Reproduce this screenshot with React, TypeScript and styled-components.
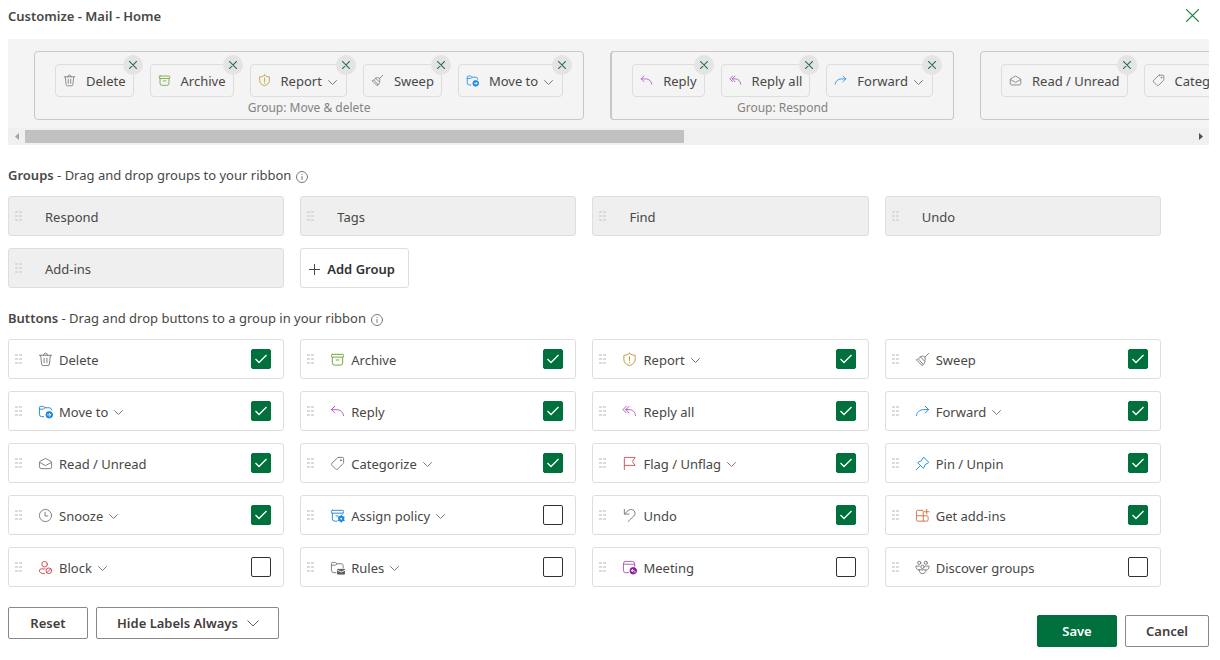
import React, { useState } from "react";
import styled, { createGlobalStyle } from "styled-components";

const GlobalStyle = createGlobalStyle`
  * { box-sizing: border-box; }
  body {
    margin: 0;
    background: #ffffff;
    color: #484746;
    font-family: "Noto Sans", "Open Sans", sans-serif;
    font-size: 13px;
    line-height: 20px;
  }
  button, input, select { font: inherit; color: inherit; }
  h1, h2, ul { margin: 0; padding: 0; font: inherit; }
  ul { list-style: none; }
`;

/* ---------- icons ---------- */

const Svg = styled.svg<{ $size?: number; $color?: string }>`
  display: block;
  flex: none;
  width: ${(p) => p.$size ?? 15}px;
  height: ${(p) => p.$size ?? 15}px;
  color: ${(p) => p.$color ?? "#7a7978"};
  fill: none;
  stroke: currentColor;
  stroke-linecap: round;
  stroke-linejoin: round;
`;

const PURPLE = "#b052c0";
const BLUE = "#1e88dc";
const GREY = "#7a7978";

type Glyph = { color: string; art: React.ReactNode };

const ARCHIVE_TOP = "M2.5 2.5h11a1 1 0 0 1 1 1v1a1 1 0 0 1-1 1h-11a1 1 0 0 1-1-1v-1a1 1 0 0 1 1-1z";

const glyphs: Record<string, Glyph> = {
  delete: {
    color: GREY,
    art: <path d="M1.5 3.5h13M5.8 3.5a2.2 2.2 0 0 1 4.4 0M2.8 3.5l1.1 9.6a1.5 1.5 0 0 0 1.5 1.4h5.2a1.5 1.5 0 0 0 1.5-1.4l1.1-9.6M6.5 6.5v5M9.5 6.5v5" />,
  },
  archive: {
    color: "#6ba32f",
    art: <path d={ARCHIVE_TOP + "M2.5 5.5v6a2.5 2.5 0 0 0 2.5 2.5h6a2.5 2.5 0 0 0 2.5-2.5v-6M6.5 8.5h3"} />,
  },
  report: {
    color: "#bf972b",
    art: <path d="M8 1.5c-1.8 1.4-3.7 2-6 2v4.3c0 3.300 2.200 5.500 6 6.700 3.800-1.200 6-3.400 6-6.700V3.500c-2.300 0-4.200-.6-6-2zM8 5v4.200M8 11.200v.3" />,
  },
  sweep: {
    color: GREY,
    art: <path d="M14.500 1.500l-4.300 4.400M6.300 5c1.400-1.100 2.900-.8 3.900.3s1.200 2.500.3 4M5.800 5.300l4.900 4.900c-.6 1.600-1.500 3-3 4.400L1.400 8.200c1.800-.5 3.200-1.400 4.400-2.900zM4.200 8.100l1.300 1.200M5.800 9.900l1.600 1.700M7.600 12l.8 1" />,
  },
  moveTo: {
    color: BLUE,
    art: (
      <>
        <path d="M6 13.500H4A2.500 2.500 0 0 1 1.500 11V4A1.500 1.500 0 0 1 3 2.500h2.200c.5 0 .8.2 1.100.5L7.500 4h4.500A2.500 2.500 0 0 1 14.500 6.500M1.500 5.500h3.800c.4 0 .7-.1 1-.4L7.500 4" />
        <circle cx="12" cy="11.500" r="3.500" fill="currentColor" />
        <path d="M10.300 11.500h3.200M12.200 10l1.500 1.500-1.500 1.500" stroke="#ffffff" />
      </>
    ),
  },
  reply: {
    color: PURPLE,
    art: <path d="M5 2.500l-3.500 3.500L5 9.500M1.500 6h5c4.500 0 7.500 2.500 8 6.500" />,
  },
  replyAll: {
    color: PURPLE,
    art: <path d="M4.500 2.500L1 6l3.500 3.500M7.500 2.500L4 6l3.500 3.500M4 6h3.500c4 0 6.500 2.500 7 6.500" />,
  },
  forward: {
    color: BLUE,
    art: <path d="M11 2.500l3.500 3.500L11 9.500M14.500 6h-5c-4.500 0-7.500 2.500-8 6.500" />,
  },
  read: {
    color: GREY,
    art: <path d="M1.500 6.800c0-.5.200-.8.600-1L8 2.500l5.900 3.300c.4.200.6.500.6 1v4.700a2 2 0 0 1-2 2h-9a2 2 0 0 1-2-2zM1.800 6.800L8 10.300l6.200-3.500" />,
  },
  categorize: {
    color: GREY,
    art: (
      <>
        <path d="M9.200 1.500h4.300a1 1 0 0 1 1 1v4.300c0 .5-.2.9-.5 1.200l-5.700 5.800a1.700 1.700 0 0 1-2.400 0L2.100 10a1.700 1.700 0 0 1 0-2.400L8 1.900c.3-.3.700-.4 1.200-.4z" />
        <circle cx="11.500" cy="4.500" r=".5" fill="currentColor" />
      </>
    ),
  },
  flag: {
    color: "#cc565d",
    art: <path d="M2.500 14.500v-13h11.500l-3 4.200 3 4.300H2.500" />,
  },
  pin: {
    color: BLUE,
    art: <path d="M9.700 1.800l4.500 4.500c.4.400.3 1-.2 1.200l-3.100 1.600-1.400 3.400c-.2.500-.7.600-1.100.2L3.300 7.600c-.4-.4-.3-.9.2-1.100l3.400-1.400 1.600-3.100c.2-.5.8-.6 1.200-.2zM5.800 10.200l-4.300 4.300" />,
  },
  snooze: {
    color: GREY,
    art: (
      <>
        <circle cx="8" cy="8" r="6.500" />
        <path d="M7.500 4.500v4h3" />
      </>
    ),
  },
  policy: {
    color: BLUE,
    art: (
      <>
        <path d={ARCHIVE_TOP + "M2.500 5.500v6a2.500 2.500 0 0 0 2.500 2.500h2.500M13.500 5.500v1M6.500 8.500h2"} />
        <circle cx="12" cy="11.500" r="2.200" strokeWidth="2" />
        <path d="M12 8v7M9 9.800l6 3.400M15 9.800l-6 3.400" strokeWidth="1.400" />
        <circle cx="12" cy="11.500" r="1" fill="#ffffff" stroke="none" />
      </>
    ),
  },
  undo: {
    color: GREY,
    art: <path d="M2.500 1.500v5h5M2.800 6.200l3.600-3.300c2-1.800 4.900-1.700 6.500.1 1.500 1.700 1.300 4-.3 5.600L6.500 14.500" />,
  },
  addins: {
    color: "#d96f3f",
    art: (
      <path d="M7.500 2.500H3A1.500 1.500 0 0 0 1.500 4v8.500A1.500 1.500 0 0 0 3 14h9.500a1.500 1.500 0 0 0 1.500-1.500V9.800a1.500 1.500 0 0 0-1.500-1.500h-11M7.500 2.500h.3a1 1 0 0 1 1 1V14M12.500 1.500v5M10 4h5" />
    ),
  },
  block: {
    color: "#c4474f",
    art: (
      <>
        <circle cx="7" cy="4.500" r="3" />
        <path d="M7.500 9.500h-4a2 2 0 0 0-2 2c0 2 2 3 5.500 3" />
        <circle cx="11.500" cy="11.500" r="3" />
        <path d="M9.500 13.500l4-4" />
      </>
    ),
  },
  rules: {
    color: GREY,
    art: (
      <>
        <path d="M6.500 13.500H4A2.500 2.500 0 0 1 1.500 11V4A1.500 1.500 0 0 1 3 2.500h2.200c.5 0 .8.200 1.100.5L7.500 4h4.500A2 2 0 0 1 14 6v2.500M1.500 5.500h3.800c.4 0 .7-.1 1-.4L7.500 4" />
        <path d="M8.500 10h7v5h-7z" fill="#5c5b5a" stroke="#5c5b5a" />
        <path d="M8.500 11.200l3.500 1.600 3.500-1.600" stroke="#ffffff" />
      </>
    ),
  },
  meeting: {
    color: PURPLE,
    art: (
      <>
        <path d="M7 13.500H4A2.500 2.500 0 0 1 1.500 11V4A2.500 2.500 0 0 1 4 1.500h7A2.500 2.500 0 0 1 13.500 4v3M1.500 4.500h12" />
        <circle cx="12" cy="11.500" r="3.500" fill="#8a1f9c" stroke="#8a1f9c" />
        <path d="M11.500 9.800l-1.500 1.500 1.500 1.500M10.200 11.300h2c1 0 1.700.6 1.800 1.700" stroke="#ffffff" />
      </>
    ),
  },
  discover: {
    color: GREY,
    art: (
      <>
        <circle cx="4.500" cy="3" r="1.700" />
        <circle cx="11.500" cy="3" r="1.700" />
        <circle cx="8" cy="7.300" r="1.800" />
        <path d="M4.700 6.500H1c0 2.500 1 4 2.900 4.300M11.300 6.500H15c0 2.500-1 4-2.900 4.300M4.500 10.500h7c.2 2.500-1.200 4-3.500 4s-3.700-1.500-3.500-4z" />
      </>
    ),
  },
};

const Icon = ({ name, size }: { name: string; size?: number }) => (
  <Svg viewBox="0 0 16 16" $size={size} $color={glyphs[name].color} aria-hidden="true">
    {glyphs[name].art}
  </Svg>
);

const ChevronSvg = styled(Svg)`
  width: 9px;
  height: 5px;
  margin-top: 3px;
  color: #7a7978;
`;
const Chevron = () => (
  <ChevronSvg viewBox="0 0 9 5" aria-hidden="true">
    <path d="M.5.5l4 4 4-4" />
  </ChevronSvg>
);

const Cross = ({ size, color }: { size: number; color: string }) => (
  <Svg viewBox="0 0 12 12" $size={size} $color={color} aria-hidden="true">
    <path d="M.5.500l11 11M11.500.500l-11 11" strokeWidth={14 / size} />
  </Svg>
);

const GripSvg = styled.svg`
  display: block;
  flex: none;
  width: 7px;
  height: 10px;
  fill: #dcdbda;
`;
const Grip = () => (
  <GripSvg viewBox="0 0 7 10" aria-hidden="true">
    <path d="M0 0h3v2H0zM4 0h3v2H4zM0 4h3v2H0zM4 4h3v2H4zM0 8h3v2H0zM4 8h3v2H4z" />
  </GripSvg>
);

const Info = () => (
  <Svg viewBox="0 0 12 12" $size={12} $color="#7a7978" role="img" aria-label="More information">
    <circle cx="6" cy="6" r="5.500" />
    <path d="M6 5.500v3M6 3.300v.2" />
  </Svg>
);

/* ---------- layout ---------- */

const Page = styled.main`
  padding: 0 11px 12px 8px;
`;

const Header = styled.header`
  display: flex;
  align-items: flex-start;
  justify-content: space-between;
  height: 39px;
  padding: 6px 10px 0 0;
`;

const Title = styled.h1`
  font-weight: 600;
`;

const CloseButton = styled.button`
  padding: 3px 0;
  border: 0;
  background: none;
`;

const RibbonFrame = styled.section`
  background: #f4f4f4;
`;

const Ribbon = styled.div`
  display: flex;
  gap: 26px;
  padding: 12px 26px 8px;
  overflow: hidden;
`;

const RibbonGroup = styled.div<{ $accent?: boolean }>`
  flex: none;
  padding: 12px 20px 3px;
  border: 1px solid #c8c8c8;
  border-left-width: ${(p) => (p.$accent ? 2 : 1)}px;
  border-radius: 4px;
`;

const Chips = styled.ul`
  display: flex;
  gap: 16px;
`;

const Chip = styled.li`
  position: relative;
  display: flex;
  align-items: center;
  height: 33px;
  padding: 0 7px;
  border: 1px solid #dddddd;
  border-radius: 4px;
  white-space: nowrap;
`;

const ChipLabel = styled.span`
  margin-left: 10px;
  padding-top: 1px;
`;

const ChipChevron = styled.span`
  margin-left: 6px;
  margin-right: 2px;
`;

const RemoveButton = styled.button`
  position: absolute;
  top: -10px;
  right: -10px;
  display: grid;
  place-items: center;
  width: 20px;
  height: 20px;
  padding: 0;
  border: 0;
  border-radius: 50%;
  background: #e4e4e4;
`;

const GroupCaption = styled.div`
  margin-top: 3px;
  color: #84827f;
  font-size: 12px;
  line-height: 16px;
  text-align: center;
`;

const ScrollTrack = styled.div`
  display: flex;
  align-items: center;
  height: 17px;
  background: #f0f0f0;
`;

const ScrollArrow = styled.button<{ $dim?: boolean }>`
  display: grid;
  place-items: center;
  width: 17px;
  height: 17px;
  padding: 0;
  border: 0;
  background: none;
  color: ${(p) => (p.$dim ? "#a3a3a3" : "#505050")};
`;

const ArrowSvg = styled.svg`
  width: 4px;
  height: 7px;
  fill: currentColor;
`;

const ScrollLane = styled.div`
  flex: 1;
`;

const ScrollThumb = styled.div`
  width: 56.5%;
  height: 13px;
  background: #c1c1c1;
`;

const SectionTitle = styled.h2`
  display: flex;
  align-items: center;
  gap: 5px;
  margin-top: 20px;
  margin-bottom: 11px;
`;

const Strong = styled.strong`
  font-weight: 600;
`;

const InfoWrap = styled.span`
  padding-top: 3px;
`;

const CardGrid = styled.ul`
  display: grid;
  grid-template-columns: repeat(4, 1fr);
  gap: 12px 16px;
  width: 96%;
`;

const Card = styled.li<{ $filled?: boolean }>`
  display: flex;
  align-items: center;
  height: 40px;
  padding: 0 12px 0 6px;
  border: 1px solid #dedede;
  border-radius: 3px;
  background: ${(p) => (p.$filled ? "#efefef" : "#ffffff")};
`;

const GroupName = styled.span`
  margin-left: 23px;
  padding-top: 2px;
`;

const AddGroupCell = styled.li`
  display: flex;
`;

const AddGroupButton = styled.button`
  display: flex;
  align-items: center;
  gap: 7px;
  height: 40px;
  padding: 2px 13px 0 8px;
  border: 1px solid #dedede;
  border-radius: 3px;
  background: #ffffff;
  color: #323130;
  font-weight: 600;
`;

const ItemLabel = styled.label`
  display: flex;
  align-items: center;
  gap: 6px;
  flex: 1;
  margin-left: 16px;
`;

const ItemText = styled.span`
  padding-top: 2px;
`;

const CheckWrap = styled.span`
  position: relative;
  display: block;
  flex: none;
  width: 20px;
  height: 20px;
`;

const CheckInput = styled.input`
  appearance: none;
  display: block;
  width: 20px;
  height: 20px;
  margin: 0;
  border: 1px solid #323130;
  border-radius: 2px;
  background: #ffffff;
  &:checked {
    border-color: #00703c;
    background: #00703c;
  }
`;

const CheckMark = styled.svg`
  position: absolute;
  inset: 0;
  width: 20px;
  height: 20px;
  fill: none;
  stroke: #ffffff;
  stroke-width: 1.3;
  pointer-events: none;
`;

const Footer = styled.footer`
  display: flex;
  justify-content: space-between;
  margin-top: 20px;
`;

const Actions = styled.div<{ $drop?: boolean }>`
  display: flex;
  gap: 8px;
  margin-top: ${(p) => (p.$drop ? 8 : 0)}px;
`;

const ActionButton = styled.button<{ $primary?: boolean }>`
  min-width: 80px;
  height: 32px;
  padding: 0 20px;
  border: 1px solid ${(p) => (p.$primary ? "#00703c" : "#8a8886")};
  border-radius: 2px;
  background: ${(p) => (p.$primary ? "#00703c" : "#ffffff")};
  color: ${(p) => (p.$primary ? "#ffffff" : "#3f3e3d")};
  font-weight: 600;
`;

const SelectWrap = styled.div`
  position: relative;
`;

const LabelSelect = styled.select`
  appearance: none;
  width: 183px;
  height: 32px;
  padding: 0 36px 0 20px;
  border: 1px solid #8a8886;
  border-radius: 2px;
  background: #ffffff;
  color: #3f3e3d;
  font-weight: 600;
`;

const SelectChevron = styled.svg`
  position: absolute;
  top: 13px;
  right: 20px;
  width: 12px;
  height: 7px;
  fill: none;
  stroke: #6b5f4c;
  pointer-events: none;
`;

/* ---------- data ---------- */

type Command = { icon: string; label: string; menu?: boolean };

const ribbonGroups: { caption?: string; accent?: boolean; items: Command[] }[] = [
  {
    caption: "Group: Move & delete",
    items: [
      { icon: "delete", label: "Delete" },
      { icon: "archive", label: "Archive" },
      { icon: "report", label: "Report", menu: true },
      { icon: "sweep", label: "Sweep" },
      { icon: "moveTo", label: "Move to", menu: true },
    ],
  },
  {
    caption: "Group: Respond",
    accent: true,
    items: [
      { icon: "reply", label: "Reply" },
      { icon: "replyAll", label: "Reply all" },
      { icon: "forward", label: "Forward", menu: true },
    ],
  },
  {
    items: [
      { icon: "read", label: "Read / Unread" },
      { icon: "categorize", label: "Categorize", menu: true },
    ],
  },
];

const groupNames = ["Respond", "Tags", "Find", "Undo", "Add-ins"];

const commands: (Command & { on: boolean })[] = [
  { icon: "delete", label: "Delete", on: true },
  { icon: "archive", label: "Archive", on: true },
  { icon: "report", label: "Report", menu: true, on: true },
  { icon: "sweep", label: "Sweep", on: true },
  { icon: "moveTo", label: "Move to", menu: true, on: true },
  { icon: "reply", label: "Reply", on: true },
  { icon: "replyAll", label: "Reply all", on: true },
  { icon: "forward", label: "Forward", menu: true, on: true },
  { icon: "read", label: "Read / Unread", on: true },
  { icon: "categorize", label: "Categorize", menu: true, on: true },
  { icon: "flag", label: "Flag / Unflag", menu: true, on: true },
  { icon: "pin", label: "Pin / Unpin", on: true },
  { icon: "snooze", label: "Snooze", menu: true, on: true },
  { icon: "policy", label: "Assign policy", menu: true, on: false },
  { icon: "undo", label: "Undo", on: true },
  { icon: "addins", label: "Get add-ins", on: true },
  { icon: "block", label: "Block", menu: true, on: false },
  { icon: "rules", label: "Rules", menu: true, on: false },
  { icon: "meeting", label: "Meeting", on: false },
  { icon: "discover", label: "Discover groups", on: false },
];

/* ---------- parts ---------- */

const RibbonChip = ({ icon, label, menu }: Command) => (
  <Chip>
    <Icon name={icon} size={13} />
    <ChipLabel>{label}</ChipLabel>
    {menu && (
      <ChipChevron>
        <Chevron />
      </ChipChevron>
    )}
    <RemoveButton type="button" aria-label={`Remove ${label}`}>
      <Cross size={8} color="#2d7253" />
    </RemoveButton>
  </Chip>
);

const CommandCard = ({ icon, label, menu, on }: Command & { on: boolean }) => {
  const [checked, setChecked] = useState(on);
  const id = `command-${icon}`;
  return (
    <Card>
      <Grip />
      <ItemLabel htmlFor={id}>
        <Icon name={icon} />
        <ItemText>{label}</ItemText>
        {menu && <Chevron />}
      </ItemLabel>
      <CheckWrap>
        <CheckInput id={id} type="checkbox" checked={checked} onChange={() => setChecked(!checked)} />
        {checked && (
          <CheckMark viewBox="0 0 20 20" aria-hidden="true">
            <path d="M4.500 10l3.500 3.500L15.500 6" />
          </CheckMark>
        )}
      </CheckWrap>
    </Card>
  );
};

export default function App() {
  return (
    <>
      <GlobalStyle />
      <Page>
        <Header>
          <Title>Customize - Mail - Home</Title>
          <CloseButton type="button" aria-label="Close">
            <Cross size={13} color="#0a8043" />
          </CloseButton>
        </Header>

        <RibbonFrame aria-label="Ribbon">
          <Ribbon>
            {ribbonGroups.map((group, i) => (
              <RibbonGroup key={i} $accent={group.accent}>
                <Chips>
                  {group.items.map((item) => (
                    <RibbonChip key={item.icon} {...item} />
                  ))}
                </Chips>
                {group.caption && <GroupCaption>{group.caption}</GroupCaption>}
              </RibbonGroup>
            ))}
          </Ribbon>
          <ScrollTrack>
            <ScrollArrow type="button" $dim aria-label="Scroll left">
              <ArrowSvg viewBox="0 0 4 7">
                <path d="M4 0v7L0 3.500z" />
              </ArrowSvg>
            </ScrollArrow>
            <ScrollLane>
              <ScrollThumb />
            </ScrollLane>
            <ScrollArrow type="button" aria-label="Scroll right">
              <ArrowSvg viewBox="0 0 4 7">
                <path d="M0 0v7l4-3.500z" />
              </ArrowSvg>
            </ScrollArrow>
          </ScrollTrack>
        </RibbonFrame>

        <SectionTitle>
          <span>
            <Strong>Groups</Strong> - Drag and drop groups to your ribbon
          </span>
          <InfoWrap>
            <Info />
          </InfoWrap>
        </SectionTitle>
        <CardGrid>
          {groupNames.map((name) => (
            <Card key={name} $filled>
              <Grip />
              <GroupName>{name}</GroupName>
            </Card>
          ))}
          <AddGroupCell>
            <AddGroupButton type="button">
              <Svg viewBox="0 0 11 11" $size={11} $color="#4a4948" aria-hidden="true">
                <path d="M5.500 0v11M0 5.500h11" />
              </Svg>
              Add Group
            </AddGroupButton>
          </AddGroupCell>
        </CardGrid>

        <SectionTitle>
          <span>
            <Strong>Buttons</Strong> - Drag and drop buttons to a group in your ribbon
          </span>
          <InfoWrap>
            <Info />
          </InfoWrap>
        </SectionTitle>
        <CardGrid>
          {commands.map((command) => (
            <CommandCard key={command.icon} {...command} />
          ))}
        </CardGrid>

        <Footer>
          <Actions>
            <ActionButton type="button">Reset</ActionButton>
            <SelectWrap>
              <LabelSelect aria-label="Label visibility" defaultValue="hide">
                <option value="hide">Hide Labels Always</option>
              </LabelSelect>
              <SelectChevron viewBox="0 0 12 7" aria-hidden="true">
                <path d="M.5.500l5.500 5.500 5.500-5.500" />
              </SelectChevron>
            </SelectWrap>
          </Actions>
          <Actions $drop>
            <ActionButton type="button" $primary>
              Save
            </ActionButton>
            <ActionButton type="button">Cancel</ActionButton>
          </Actions>
        </Footer>
      </Page>
    </>
  );
}
